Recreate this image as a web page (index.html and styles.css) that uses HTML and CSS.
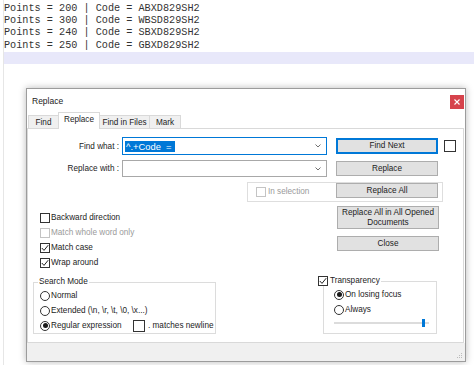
FILE: index.html
```html
<!DOCTYPE html>
<html>
<head>
<meta charset="utf-8">
<link rel="stylesheet" href="styles.css">
</head>
<body>
<div class="editor">
  <div class="line">Points = 200 | Code = ABXD829SH2</div>
  <div class="line">Points = 300 | Code = WBSD829SH2</div>
  <div class="line">Points = 240 | Code = SBXD829SH2</div>
  <div class="line">Points = 250 | Code = GBXD829SH2</div>
  <div class="line current"></div>
</div>

<div class="dialog">
  <div class="titlebar">
    <span class="title">Replace</span>
    <span class="close"><svg width="6" height="6" viewBox="0 0 6 6"><path d="M0.5 0.5 L5.5 5.5 M5.5 0.5 L0.5 5.5" stroke="#fff" stroke-width="1.1" fill="none"/></svg></span>
  </div>
  <div class="tabs">
    <span class="tab t-find">Find</span>
    <span class="tab t-replace active">Replace</span>
    <span class="tab t-files">Find in Files</span>
    <span class="tab t-mark">Mark</span>
  </div>
  <div class="panel">
    <div class="row row-find">
      <span class="lbl">Find what :</span>
      <div class="combo focus"><span class="sel">^.+Code  = </span><svg class="chev" width="6" height="4" viewBox="0 0 6 4"><path d="M0.5 0.5 L3 3 L5.5 0.5" stroke="#707070" fill="none" stroke-width="1"/></svg></div>
      <button class="btn default h16">Find Next</button>
      <span class="cb big side"></span>
    </div>
    <div class="row row-replace">
      <span class="lbl">Replace with :</span>
      <div class="combo"><svg class="chev" width="6" height="4" viewBox="0 0 6 4"><path d="M0.5 0.5 L3 3 L5.5 0.5" stroke="#707070" fill="none" stroke-width="1"/></svg></div>
      <button class="btn h15">Replace</button>
    </div>
    <div class="selgroup">
      <div class="opt dis"><span class="cb disabled"></span>In selection</div>
      <button class="btn h15 rall">Replace All</button>
    </div>
    <div class="mid">
      <div class="opts">
        <div class="opt"><span class="cb"></span>Backward direction</div>
        <div class="opt dis"><span class="cb disabled"></span>Match whole word only</div>
        <div class="opt"><span class="cb"><svg width="8" height="8" viewBox="0 0 8 8"><path d="M0.8 4 L3 6.4 L7.2 1.2" stroke="#222" stroke-width="1" fill="none"/></svg></span>Match case</div>
        <div class="opt"><span class="cb"><svg width="8" height="8" viewBox="0 0 8 8"><path d="M0.8 4 L3 6.4 L7.2 1.2" stroke="#222" stroke-width="1" fill="none"/></svg></span>Wrap around</div>
      </div>
      <div class="btncol">
        <button class="btn h23">Replace All in All Opened<br>Documents</button>
        <button class="btn h15 close-btn">Close</button>
      </div>
    </div>
    <div class="bottom">
      <fieldset class="mode">
        <legend>Search Mode</legend>
        <div class="opt radio-row"><span class="rd"></span>Normal</div>
        <div class="opt radio-row"><span class="rd"></span>Extended (\n, \r, \t, \0, \x...)</div>
        <div class="opt radio-row"><span class="rxlbl"><span class="rd on"></span>Regular expression</span><span class="cb big"></span><span class="nl">. matches newline</span></div>
      </fieldset>
      <fieldset class="trans">
        <legend><span class="cb"><svg width="8" height="8" viewBox="0 0 8 8"><path d="M0.8 4 L3 6.4 L7.2 1.2" stroke="#222" stroke-width="1" fill="none"/></svg></span>Transparency</legend>
        <div class="opt radio-row"><span class="rd on"></span>On losing focus</div>
        <div class="opt radio-row"><span class="rd"></span>Always</div>
        <div class="slider"><span class="track"></span><span class="thumb"></span></div>
      </fieldset>
    </div>
  </div>
  <div class="status">
    <svg class="grip" width="6" height="6" viewBox="0 0 6 6"><rect x="4" y="0" width="1" height="1" fill="#bbb"/><rect x="2" y="2" width="1" height="1" fill="#bbb"/><rect x="4" y="2" width="1" height="1" fill="#bbb"/><rect x="0" y="4" width="1" height="1" fill="#bbb"/><rect x="2" y="4" width="1" height="1" fill="#bbb"/><rect x="4" y="4" width="1" height="1" fill="#bbb"/></svg>
  </div>
</div>
</body>
</html>
```

FILE: styles.css
```css
html, body {
  margin: 0;
  padding: 0;
}
body {
  width: 474px;
  height: 365px;
  overflow: hidden;
  position: relative;
  background: #fff;
}

/* editor */
.editor {
  margin-left: 3px;
  border-left: 1px solid #e6e6e6;
  height: 365px;
  box-sizing: border-box;
  padding-top: 3px;
  font-family: "Liberation Mono", monospace;
  font-size: 10.2px;
  color: #333;
}
.line {
  height: 12.2px;
  line-height: 12.2px;
  white-space: pre;
}
.line.current {
  background: #e8e8fa;
}

/* dialog window */
.dialog {
  position: absolute;
  left: 26px;
  top: 88px;
  width: 440px;
  height: 274px;
  box-sizing: border-box;
  border: 1px solid #9c9c9c;
  background: #fff;
  box-shadow: 0 0 7px rgba(0, 0, 0, 0.28);
  font-family: "Liberation Sans", Arial, sans-serif;
  font-size: 8.2px;
  color: #1c1c1c;
}
.titlebar {
  height: 23px;
  display: flex;
  align-items: center;
}
.title {
  margin-left: 5px;
  font-size: 8.5px;
  color: #222;
}
.close {
  margin-left: auto;
  margin-right: 1px;
  margin-top: 3px;
  width: 14px;
  height: 14px;
  background: #d6434c;
  display: flex;
  align-items: center;
  justify-content: center;
}
.close svg { display: block; }

.tabs {
  height: 16px;
  display: flex;
  align-items: flex-end;
  padding-left: 1px;
  position: relative;
  z-index: 2;
}
.tab {
  box-sizing: border-box;
  height: 13px;
  border: 1px solid #d9d9d9;
  border-bottom: none;
  background: #f0f0f0;
  display: flex;
  align-items: center;
  justify-content: center;
  color: #1c1c1c;
  margin-left: -1px;
}
.t-find { width: 31px; margin-left: 0; }
.t-replace { width: 42px; }
.t-files { width: 51px; }
.t-mark { width: 32px; }
.tab.active {
  height: 17px;
  margin-bottom: -1px;
  background: #fff;
  align-items: flex-start;
  padding-top: 2px;
  position: relative;
  z-index: 3;
}

.panel {
  margin-right: 1px;
  height: 215px;
  box-sizing: border-box;
  border: 1px solid #d9d9d9;
  background: #fff;
}

.row {
  display: flex;
  align-items: center;
}
.row-find {
  margin-top: 8px;
  height: 18px;
}
.row-replace {
  margin-top: 5px;
  height: 17px;
}
.lbl {
  width: 91px;
  text-align: right;
}
.combo {
  margin-left: 3px;
  width: 205px;
  height: 100%;
  box-sizing: border-box;
  border: 1px solid #a8a8a8;
  display: flex;
  align-items: center;
  position: relative;
}
.combo.focus {
  border-color: #0078d7;
}
.sel {
  margin-left: 2px;
  background: #0078d7;
  color: #fff;
  white-space: pre;
  font-size: 9.4px;
  height: 11px;
  line-height: 11px;
  padding: 0 1px;
}
.chev {
  margin-left: auto;
  margin-right: 5px;
  display: block;
}

.btn {
  box-sizing: border-box;
  width: 102px;
  background: #e1e1e1;
  border: 1px solid #adadad;
  font: inherit;
  color: #1c1c1c;
  padding: 0;
  margin: 0;
  line-height: 10px;
}
.h15 { height: 15px; }
.h16 { height: 16px; }
.h23 { height: 23px; }
.row .btn { margin-left: 9px; }
.btn.default {
  border-color: #0078d7;
  box-shadow: inset 0 0 0 1px #0078d7;
}

.cb {
  box-sizing: border-box;
  width: 10px;
  height: 10px;
  border: 1px solid #333;
  background: #fff;
  margin-right: 2px;
  flex: none;
  display: flex;
  align-items: center;
  justify-content: center;
}
.cb svg { display: block; }
.cb.big {
  width: 12px;
  height: 12px;
}
.cb.side {
  margin-left: 6px;
}
.cb.disabled {
  border-color: #c4c4c4;
}

.selgroup {
  margin-top: 5px;
  margin-left: 219px;
  width: 196px;
  height: 20px;
  box-sizing: border-box;
  border: 1px solid #dedede;
  display: flex;
  align-items: flex-start;
}
.selgroup .opt {
  margin-left: 8px;
  margin-top: 1px;
}
.rall {
  margin-left: auto;
  margin-right: 4px;
  margin-top: 0px;
}

.opt {
  height: 15px;
  display: flex;
  align-items: center;
  white-space: nowrap;
}
.opt.dis {
  color: #9a9a9a;
}

.mid {
  display: flex;
  margin-top: 4px;
}
.opts {
  margin-left: 12px;
  margin-top: 4px;
}
.opts .cb {
  margin-right: 1px;
}
.btncol {
  margin-left: auto;
  margin-right: 24px;
  display: flex;
  flex-direction: column;
}
.close-btn {
  margin-top: 7px;
}

.bottom {
  display: flex;
  align-items: flex-start;
  margin-top: 7px;
}
fieldset {
  margin: 0;
  padding: 0;
  border: 1px solid #dcdcdc;
  min-inline-size: 0;
  box-sizing: border-box;
}
legend {
  padding: 0 1px;
  line-height: 10px;
  height: 10px;
  display: flex;
  align-items: center;
}
.mode {
  margin-left: 5px;
  width: 183px;
  height: 57px;
}
.mode legend {
  margin-left: 4px;
}
.mode .radio-row {
  margin-left: 6px;
}
.radio-row:first-of-type {
  margin-top: 1px;
}
.rd {
  box-sizing: border-box;
  width: 10px;
  height: 10px;
  border: 1px solid #333;
  border-radius: 50%;
  margin-right: 1px;
  flex: none;
  display: flex;
  align-items: center;
  justify-content: center;
}
.rd.on::after {
  content: "";
  width: 5px;
  height: 5px;
  border-radius: 50%;
  background: #1a1a1a;
}
.rxlbl {
  width: 93px;
  display: flex;
  align-items: center;
}
.nl {
  margin-left: 1px;
}

.trans {
  margin-left: 107px;
  width: 114px;
  height: 58px;
  margin-top: -1px;
}
.trans legend {
  margin-left: -6px;
  padding-left: 0;
}
.trans legend .cb {
  margin-right: 2px;
}
.trans .radio-row {
  margin-left: 10px;
}
.slider {
  position: relative;
  margin-left: 10px;
  margin-top: 2px;
  width: 95px;
  height: 8px;
}
.track {
  position: absolute;
  left: 0;
  right: 0;
  top: 3px;
  height: 2px;
  background: #dcdcdc;
}
.thumb {
  position: absolute;
  left: 88px;
  top: 0;
  width: 3px;
  height: 8px;
  background: #0078d7;
}

.status {
  height: 18px;
  background: #f0f0f0;
  display: flex;
  align-items: flex-end;
  justify-content: flex-end;
}
.grip {
  display: block;
  margin: 0 2px 2px 0;
}
```
